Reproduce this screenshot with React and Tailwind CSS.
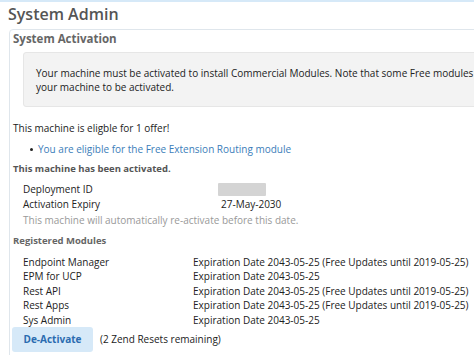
export default function App() {
  const modules = [
    ["Endpoint Manager", "Expiration Date 2043-05-25 (Free Updates until 2019-05-25)"],
    ["EPM for UCP", "Expiration Date 2043-05-25"],
    ["Rest API", "Expiration Date 2043-05-25 (Free Updates until 2019-05-25)"],
    ["Rest Apps", "Expiration Date 2043-05-25 (Free Updates until 2019-05-25)"],
    ["Sys Admin", "Expiration Date 2043-05-25"],
  ];

  return (
    <div className="w-[474px] h-[355px] overflow-hidden bg-white font-['Open_Sans',sans-serif] text-[10px] text-[#222]">
      <div className="h-[2px] bg-[#d6e9f8]"></div>

      <h1 className="pl-[8px] h-[27px] text-[16px] leading-[24px] font-semibold text-[#555]">System Admin</h1>

      <div className="ml-[9px] -mr-[20px] border border-[#dfe6ec] rounded-[4px] pb-[6px]">
        <h2 className="pl-[3px] h-[18px] text-[11.5px] leading-[18px] font-bold text-[#666]">System Activation</h2>

        <div className="ml-[13px] mt-[4px] border border-[#e6e6e6] rounded-[3px] bg-[#f3f3f3] pl-[12px] pt-[13px] pb-[12px] leading-[14px] whitespace-nowrap">
          <p>Your machine must be activated to install Commercial Modules. Note that some Free modules</p>
          <p>your machine to be activated.</p>
        </div>

        <p className="pl-[3px] mt-[14px] leading-[14px]">This machine is eligble for 1 offer!</p>
        <ul className="pl-[20px] mt-[7px] leading-[14px]">
          <li className="flex items-center gap-[5px] text-[#3b7db9]">
            <span className="w-[3px] h-[3px] rounded-full bg-[#222]"></span>
            You are eligible for the Free Extension Routing module
          </li>
        </ul>

        <h3 className="pl-[3px] mt-[6px] leading-[14px] text-[9.5px] font-bold text-[#555]">This machine has been activated.</h3>

        <div className="pl-[13px] mt-[5.5px] leading-[15px]">
          <div className="flex items-center">
            <span className="w-[195px]">Deployment ID</span>
            <span className="w-[48px] h-[13px] bg-[#d4d4d4] rounded-[1px]"></span>
          </div>
          <div className="flex">
            <span className="w-[198px]">Activation Expiry</span>
            <span>27-May-2030</span>
          </div>
          <p className="mt-[1px] text-[#999]">This machine will automatically re-activate before this date.</p>
        </div>

        <h3 className="pl-[3px] mt-[6.5px] leading-[14px] font-bold text-[#666] text-[9.5px]">Registered Modules</h3>

        <div className="pl-[13px] mt-[6.75px] leading-[14.5px]">
          {modules.map(([name, exp]) => (
            <div key={name} className="flex">
              <span className="w-[170px] shrink-0">{name}</span>
              <span className="whitespace-nowrap">{exp}</span>
            </div>
          ))}
        </div>

        <div className="flex items-center gap-[7px] pl-[2px]">
          <button className="w-[81px] h-[25px] rounded-[3px] bg-[#d6e9f8] text-[#2b6cb0] font-bold">De-Activate</button>
          <span>(2 Zend Resets remaining)</span>
        </div>
      </div>
    </div>
  );
}
